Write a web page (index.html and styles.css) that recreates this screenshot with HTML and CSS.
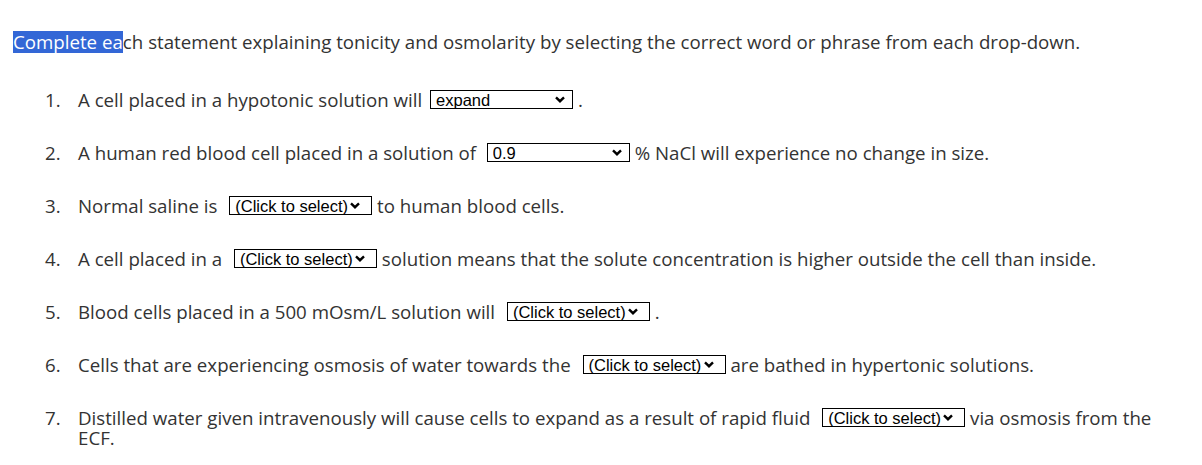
FILE: index.html
```html
<!DOCTYPE html>
<html lang="en">
<head>
<meta charset="utf-8">
<title>Tonicity and osmolarity</title>
<link rel="stylesheet" href="styles.css">
</head>
<body>
<main class="question">
  <p class="prompt"><span class="hl">Complete ea</span>ch statement explaining tonicity and osmolarity by selecting the correct word or phrase from each drop-down.</p>
  <ol class="items">
    <li class="item"><span class="num">1.</span><span class="text">A cell placed in a hypotonic solution will <span class="dd dd-tight"><select class="dd-select"><option>expand</option></select><svg class="chev" viewBox="0 0 10 7" width="10" height="7"><path d="M1 1.3L5 5.2l4-3.9" fill="none" stroke="#000" stroke-width="2.4"/></svg></span> .</span></li>
    <li class="item"><span class="num">2.</span><span class="text">A human red blood cell placed in a solution of <span class="dd dd-mid"><select class="dd-select"><option>0.9</option></select><svg class="chev" viewBox="0 0 10 7" width="10" height="7"><path d="M1 1.3L5 5.2l4-3.9" fill="none" stroke="#000" stroke-width="2.4"/></svg></span> % NaCl will experience no change in size.</span></li>
    <li class="item"><span class="num">3.</span><span class="text">Normal saline is <span class="dd dd-ph"><select class="dd-select"><option>(Click to select)</option></select><svg class="chev" viewBox="0 0 10 7" width="10" height="7"><path d="M1 1.3L5 5.2l4-3.9" fill="none" stroke="#000" stroke-width="2.4"/></svg></span> to human blood cells.</span></li>
    <li class="item"><span class="num">4.</span><span class="text">A cell placed in a <span class="dd dd-ph"><select class="dd-select"><option>(Click to select)</option></select><svg class="chev" viewBox="0 0 10 7" width="10" height="7"><path d="M1 1.3L5 5.2l4-3.9" fill="none" stroke="#000" stroke-width="2.4"/></svg></span> solution means that the solute concentration is higher outside the cell than inside.</span></li>
    <li class="item"><span class="num">5.</span><span class="text">Blood cells placed in a 500 mOsm/L solution will <span class="dd dd-ph"><select class="dd-select"><option>(Click to select)</option></select><svg class="chev" viewBox="0 0 10 7" width="10" height="7"><path d="M1 1.3L5 5.2l4-3.9" fill="none" stroke="#000" stroke-width="2.4"/></svg></span> .</span></li>
    <li class="item"><span class="num">6.</span><span class="text">Cells that are experiencing osmosis of water towards the <span class="dd dd-ph"><select class="dd-select"><option>(Click to select)</option></select><svg class="chev" viewBox="0 0 10 7" width="10" height="7"><path d="M1 1.3L5 5.2l4-3.9" fill="none" stroke="#000" stroke-width="2.4"/></svg></span> are bathed in hypertonic solutions.</span></li>
    <li class="item"><span class="num">7.</span><span class="text">Distilled water given intravenously will cause cells to expand as a result of rapid fluid <span class="dd dd-ph"><select class="dd-select"><option>(Click to select)</option></select><svg class="chev" viewBox="0 0 10 7" width="10" height="7"><path d="M1 1.3L5 5.2l4-3.9" fill="none" stroke="#000" stroke-width="2.4"/></svg></span> via osmosis from the ECF.</span></li>
  </ol>
</main>
</body>
</html>
```
FILE: styles.css
```css
html, body {
  margin: 0;
  padding: 0;
  background: #fff;
}
.question {
  font-family: "Open Sans", "Liberation Sans", sans-serif;
  font-size: 18.7px;
  line-height: 20px;
  color: #333;
  padding: 31px 30px 0 13px;
}
.prompt {
  margin: 0;
  line-height: 22px;
}
.hl {
  display: inline-block;
  line-height: 22px;
  background: #3367d6;
  color: #fff;
}
.items {
  list-style: none;
  margin: 37px 0 0 32px;
  padding: 0;
  display: flex;
  flex-direction: column;
  gap: 33px;
}
.item {
  display: grid;
  grid-template-columns: 33px 1fr;
}
.dd {
  display: inline-flex;
  align-items: center;
  box-sizing: border-box;
  width: 143px;
  height: 19px;
  border: 1px solid #000;
  vertical-align: top;
  background: #fff;
}
.dd-tight { margin-left: 3px; }
.dd-mid { margin-left: 6px; }
.dd-ph { margin-left: 7px; }
.dd-select {
  appearance: none;
  -webkit-appearance: none;
  box-sizing: border-box;
  border: 0;
  background: transparent;
  font-family: "Liberation Sans", Arial, sans-serif;
  font-size: 16.5px;
  line-height: 15px;
  height: 17px;
  color: #000;
  padding: 2px 0 0 5px;
  margin: 0;
  flex: 1;
  min-width: 0;
  outline: none;
}
.chev {
  flex: none;
  margin-right: 7px;
}
.dd-ph .chev { margin-right: 11px; }
```
